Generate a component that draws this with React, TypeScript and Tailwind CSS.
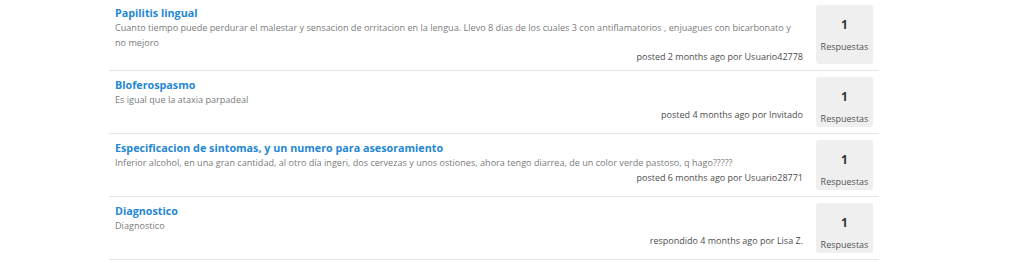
import React from "react";

type Item = {
  title: string;
  body: string;
  meta: string;
  count: number;
};

const items: Item[] = [
  {
    title: "Papilitis lingual",
    body:
      "Cuanto tiempo puede perdurar el malestar y sensacion de orritacion en la lengua. Llevo 8 dias de los cuales 3 con antiflamatorios , enjuagues con bicarbonato y no mejoro",
    meta: "posted 2 months ago por Usuario42778",
    count: 1,
  },
  {
    title: "Bloferospasmo",
    body: "Es igual que la ataxia parpadeal",
    meta: "posted 4 months ago por Invitado",
    count: 1,
  },
  {
    title: "Especificacion de sintomas, y un numero para asesoramiento",
    body:
      "Inferior alcohol, en una gran cantidad, al otro día ingeri, dos cervezas y unos ostiones, ahora tengo diarrea, de un color verde pastoso, q hago?????",
    meta: "posted 6 months ago por Usuario28771",
    count: 1,
  },
  {
    title: "Diagnostico",
    body: "Diagnostico",
    meta: "respondido 4 months ago por Lisa Z.",
    count: 1,
  },
];

export default function App() {
  return (
    <div
      className="w-[1024px] h-[266px] bg-white overflow-hidden"
      style={{ fontFamily: '"Open Sans", "Noto Sans", sans-serif' }}
    >
      <div className="ml-[109px] w-[770px] -mt-[1px]">
        {items.map((it, i) => (
          <div
            key={i}
            className="flex items-stretch px-[6px] py-[6px] border-b border-[#e6e6e6]"
          >
            <div className="flex-1 min-w-0 pr-[13px] flex flex-col">
              <a className="text-[10.75px] leading-[16px] font-bold text-[#2387d3] cursor-pointer">
                {it.title}
              </a>
              <p className="text-[9.1px] leading-[14.5px] text-[#7b7b7b]">
                {it.body}
              </p>
              <div className="text-[9px] leading-[14px] text-[#4d4d4d] text-right">
                {it.meta}
              </div>
            </div>
            <div className="w-[57px] min-h-[50px] shrink-0 bg-[#efefef] rounded-[3px] flex flex-col items-center pt-[12px]">
              <div className="text-[12px] leading-[16px] font-bold text-[#333333]">
                {it.count}
              </div>
              <div className="mt-[7px] text-[9px] leading-[14px] text-[#555555]">
                Respuestas
              </div>
            </div>
          </div>
        ))}
      </div>
    </div>
  );
}
